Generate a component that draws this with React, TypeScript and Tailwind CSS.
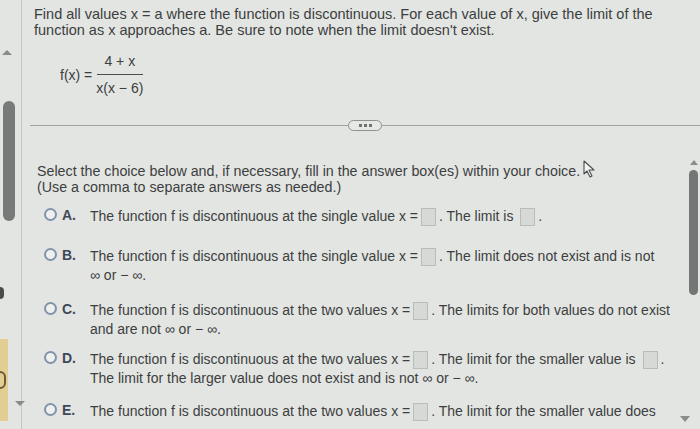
import type { ReactNode } from "react";

function Box() {
  return (
    <span className="mx-[3px] inline-block h-[18px] w-[15px] border border-[#b9bdb9] bg-[#d6d9d6] align-[-5px]" />
  );
}

function Radio() {
  return <span className="mt-[1px] h-[13px] w-[13px] shrink-0 rounded-full border-2 border-[#8193ab] bg-[#eef0ee]" />;
}

type OptionProps = {
  letter: string;
  children: ReactNode;
  className?: string;
};

function Option({ letter, children, className }: OptionProps) {
  return (
    <div className={`flex items-start ${className ?? ""}`}>
      <Radio />
      <span className="ml-[5px] w-[28px] shrink-0 font-bold leading-[16px] text-[#3f4859]">{letter}</span>
      <div className="leading-[18px]">{children}</div>
    </div>
  );
}

export default function App() {
  return (
    <div
      className="relative flex h-[429px] w-[700px] overflow-hidden bg-[#e3e5e2] text-[14px] text-[#3c3e40]"
      style={{ fontFamily: '"Liberation Sans", Arial, sans-serif' }}
    >
      {/* left gutter with scrollbar */}
      <div className="flex w-[22px] shrink-0 flex-col items-start border-r border-[#c3c6c3]">
        <span className="ml-[2px] mt-[50px] h-0 w-0 border-x-[5px] border-b-[5px] border-x-transparent border-b-[#8a8c8b]" />
        <span className="ml-[3px] mt-[46px] h-[120px] w-[12px] rounded-full bg-[#777a79]" />
        <span className="-ml-[4px] mt-[66px] h-[12px] w-[8px] rounded-full bg-[#4a4b4b]" />
        <div className="mt-[40px] flex h-[82px] w-[8px] items-center bg-[#e2cd92]">
          <span className="-ml-[6px] h-[18px] w-[12px] rounded-full border-2 border-[#6b5a3a]" />
        </div>
        <span className="ml-[15px] -mt-[20px] h-0 w-0 border-x-[5px] border-t-[5px] border-x-transparent border-t-[#8a8c8b]" />
      </div>

      <div className="relative flex flex-1 flex-col">
        {/* question */}
        <div className="pl-[12px] pt-[6px] text-[14.5px] leading-[16px]">
          <p>Find all values x = a where the function is discontinuous. For each value of x, give the limit of the</p>
          <p>function as x approaches a. Be sure to note when the limit doesn't exist.</p>
          <div className="ml-[26px] mt-[14px] flex items-center text-[14px]">
            <span>f(x) =</span>
            <div className="ml-[4px] flex flex-col items-center">
              <span className="leading-[18px]">4 + x</span>
              <span className="my-[4px] h-px w-[46px] bg-[#4a4c4e]" />
              <span className="leading-[18px]">x(x − 6)</span>
            </div>
          </div>
        </div>

        {/* divider */}
        <div className="ml-[8px] mt-[23px] flex items-center">
          <span className="h-px flex-1 bg-[#9fa29f]" />
          <span className="flex h-[11px] w-[34px] items-center justify-center gap-[2px] rounded-full border border-[#8e918e] bg-[#e6e8e5]">
            <span className="h-[3px] w-[3px] bg-[#6f7270]" />
            <span className="h-[3px] w-[3px] bg-[#6f7270]" />
            <span className="h-[3px] w-[3px] bg-[#6f7270]" />
          </span>
          <span className="h-px flex-1 bg-[#9fa29f]" />
        </div>

        {/* answer area */}
        <div className="pl-[15px] pt-[32px] text-[14.25px] leading-[16px]">
          <p>Select the choice below and, if necessary, fill in the answer box(es) within your choice.</p>
          <p>(Use a comma to separate answers as needed.)</p>
        </div>

        <div className="flex flex-col pl-[22px] pt-[12px]">
          <Option letter="A.">
            The function f is discontinuous at the single value x =<Box />. The limit is <Box />.
          </Option>
          <Option letter="B." className="mt-[21px]">
            <p>
              The function f is discontinuous at the single value x =<Box />. The limit does not exist and is not
            </p>
            <p>∞ or − ∞.</p>
          </Option>
          <Option letter="C." className="mt-[17px]">
            <p>
              The function f is discontinuous at the two values x =<Box />. The limits for both values do not exist
            </p>
            <p>and are not ∞ or − ∞.</p>
          </Option>
          <Option letter="D." className="mt-[12px]">
            <p>
              The function f is discontinuous at the two values x =<Box />. The limit for the smaller value is <Box />.
            </p>
            <p>The limit for the larger value does not exist and is not ∞ or − ∞.</p>
          </Option>
          <Option letter="E." className="mt-[15px]">
            The function f is discontinuous at the two values x =<Box />. The limit for the smaller value does
          </Option>
        </div>

        {/* cursor */}
        <svg className="absolute left-[560px] top-[160px]" width="16" height="18" viewBox="0 0 16 18">
          <path d="M2 1 L2 14 L5 11 L8 17 L10 16 L7 10 L12 10 Z" fill="#f4f5f3" stroke="#4b4d4f" strokeWidth="1.1" strokeLinejoin="round" />
        </svg>

        {/* right scrollbar */}
        <span className="absolute right-[2px] top-[160px] h-0 w-0 border-x-[4px] border-b-[5px] border-x-transparent border-b-[#8a8c8b]" />
        <span className="absolute right-[2px] top-[170px] h-[125px] w-[9px] rounded-full bg-[#737675]" />
        <span className="absolute right-[10px] top-[416px] h-0 w-0 border-x-[5px] border-t-[6px] border-x-transparent border-t-[#8a8c8b]" />
      </div>
    </div>
  );
}
